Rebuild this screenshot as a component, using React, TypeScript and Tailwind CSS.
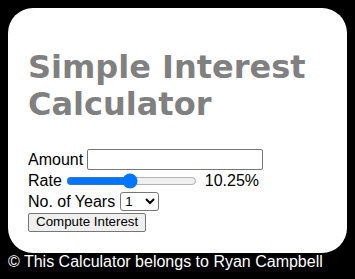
import { useState } from "react";

export default function App() {
  const [amount, setAmount] = useState<string>("");
  const [rate, setRate] = useState<number>(10.25);
  const [years, setYears] = useState<string>("1");

  return (
    <div className="min-h-screen bg-black p-2 font-['Liberation_Sans',Arial,sans-serif]">
      <div className="rounded-[25px] bg-white px-5 pt-5 pb-[21px]">
        <h1 className="mt-[21px] mb-[26px] font-['DejaVu_Sans',Verdana,sans-serif] text-[32px] leading-[37px] font-bold text-[#808080]">
          Simple Interest Calculator
        </h1>
        <div className="flex flex-col text-base text-black">
          <div className="flex h-[21px] items-center gap-1">
            <span>Amount</span>
            <input
              type="text"
              className="h-[21px] w-[176px] rounded-[2px] border border-[#767676] px-[2px] text-[13.33px]"
              value={amount}
              onChange={(e) => setAmount(e.target.value)}
            />
          </div>
          <div className="flex h-[21px] items-center">
            <span>Rate</span>
            <input
              type="range"
              min={1}
              max={20}
              step={0.25}
              className="mx-1 w-[131px]"
              value={rate}
              onChange={(e) => setRate(Number(e.target.value))}
            />
            <span className="ml-[4px]">{rate}%</span>
          </div>
          <div className="flex h-[21px] items-center gap-[5px]">
            <span>No. of Years</span>
            <select
              className="h-[19px] w-[39px] rounded-[3px] border border-[#767676] text-[13.33px]"
              value={years}
              onChange={(e) => setYears(e.target.value)}
            >
              {[1, 2, 3, 4, 5, 6, 7, 8, 9, 10].map((y) => (
                <option key={y} value={y}>
                  {y}
                </option>
              ))}
            </select>
          </div>
          <div className="flex h-[20px] items-center">
            <button className="h-[19px] rounded-[2px] border border-[#767676] bg-[#efefef] px-[7px] text-[13.33px] leading-none">
              Compute Interest
            </button>
          </div>
        </div>
      </div>
      <div className="text-base leading-[18px] text-white">
        © This Calculator belongs to Ryan Campbell
      </div>
    </div>
  );
}
